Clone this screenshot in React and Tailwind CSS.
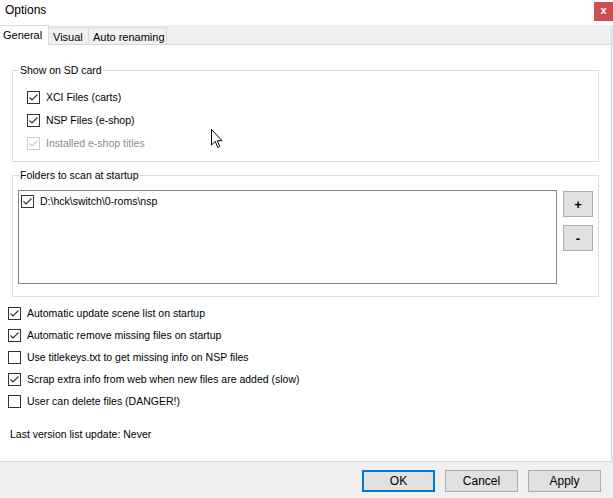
import React from "react";

const startupOptions = [
  { label: "Automatic update scene list on startup", checked: true },
  { label: "Automatic remove missing files on startup", checked: true },
  { label: "Use titlekeys.txt to get missing info on NSP files", checked: false },
  { label: "Scrap extra info from web when new files are added (slow)", checked: true },
  { label: "User can delete files (DANGER!)", checked: false },
];

function CheckBox({ checked, disabled }) {
  const color = disabled ? "#cccccc" : "#333333";
  return (
    <span
      className={
        "w-[13px] h-[13px] shrink-0 bg-white border flex items-center justify-center " +
        (disabled ? "border-[#cccccc]" : "border-[#333333]")
      }
    >
      {checked && (
        <svg width="11" height="11" viewBox="0 0 11 11">
          <path d="M1.5 5.5 L4 8 L9.5 2.5" fill="none" stroke={color} strokeWidth="1.1" />
        </svg>
      )}
    </span>
  );
}

function Row({ label, checked, disabled, className = "" }) {
  return (
    <div className={"flex items-center gap-[6px] " + className}>
      <CheckBox checked={checked} disabled={disabled} />
      <span className={disabled ? "text-[#8d8d8d]" : ""}>{label}</span>
    </div>
  );
}

function Button({ children, primary }) {
  return (
    <button
      className={
        "w-[73px] h-[22px] bg-[#e1e1e1] text-[12px] leading-none " +
        (primary ? "border-2 border-[#0078d7]" : "border border-[#adadad]")
      }
    >
      {children}
    </button>
  );
}

export default function App() {
  return (
    <div className="relative w-[613px] h-[498px] bg-[#f0f0f0] flex flex-col overflow-hidden text-[10.5px] leading-[13px] text-black font-['Liberation_Sans',Arial,sans-serif]">
      {/* title bar */}
      <div className="h-[25px] bg-white flex justify-between">
        <span className="pl-[5px] pt-[3px] text-[12px] leading-[14px]">Options</span>
        <span className="w-[19px] h-[19px] mt-[2px] bg-[#c75050] text-white text-[11px] font-bold leading-[17px] text-center">
          x
        </span>
      </div>

      {/* tabs */}
      <div className="h-[20px] mr-[1px] flex items-end text-[11px]">
        <div className="h-[20px] w-[49px] bg-white border-t border-r border-[#d9d9d9] pl-[3px] pt-[3px]">
          General
        </div>
        <div className="h-[18px] w-[40px] border-t border-r border-b border-[#d9d9d9] pl-[4px] pt-[3px]">
          Visual
        </div>
        <div className="h-[18px] w-[78px] border-t border-r border-b border-[#d9d9d9] pl-[4px] pt-[3px]">
          Auto renaming
        </div>
        <div className="flex-1 h-[18px] border-b border-r border-[#d9d9d9]" />
      </div>

      {/* tab page */}
      <div className="flex-1 mr-[1px] bg-white border-r border-b border-[#d9d9d9] flex flex-col">
        <fieldset className="mt-[19px] ml-[12px] mr-[12px] border border-[#dcdcdc] pb-[6px]">
          <legend className="ml-[6px] px-[1px] leading-[13px]">Show on SD card</legend>
          <div className="pt-[9px] pl-[14px]">
            <Row className="h-[23px]" label="XCI Files (carts)" checked />
            <Row className="h-[23px]" label="NSP Files (e-shop)" checked />
            <Row className="h-[23px]" label="Installed e-shop titles" checked disabled />
          </div>
        </fieldset>

        <fieldset className="mt-[7px] ml-[12px] mr-[12px] border border-[#dcdcdc] pb-[12px]">
          <legend className="ml-[6px] px-[1px] leading-[13px]">Folders to scan at startup</legend>
          <div className="pt-[8px] px-[5px] flex gap-[6px]">
            <div className="flex-1 h-[94px] bg-white border border-[#828790] pl-[2px] pt-[4px]">
              <Row label="D:\hck\switch\0-roms\nsp" checked />
            </div>
            <div className="w-[30px] mt-[1px] flex flex-col gap-[8px]">
              <button className="h-[26px] bg-[#e1e1e1] border border-[#adadad] text-[13px] font-bold leading-none">+</button>
              <button className="h-[26px] bg-[#e1e1e1] border border-[#adadad] text-[13px] font-bold leading-none">-</button>
            </div>
          </div>
        </fieldset>

        <div className="mt-[5px] pl-[8px]">
          {startupOptions.map((o) => (
            <Row key={o.label} className="h-[22px]" label={o.label} checked={o.checked} />
          ))}
        </div>

        <div className="mt-[16px] pl-[10px]">Last version list update: Never</div>
      </div>

      {/* footer */}
      <div className="h-[36px] flex justify-end gap-[10px] pt-[8px] pr-[12px]">
        <Button primary>OK</Button>
        <Button>Cancel</Button>
        <Button>Apply</Button>
      </div>

      {/* mouse pointer */}
      <svg className="absolute left-[211px] top-[129px]" width="12" height="20" viewBox="0 0 12 20">
        <path d="M0.5 0.5 L0.5 16 L4.2 12.4 L6.8 18.5 L8.8 17.6 L6.3 11.7 L11 11.7 Z" fill="white" stroke="black" strokeWidth="1" />
      </svg>
    </div>
  );
}
